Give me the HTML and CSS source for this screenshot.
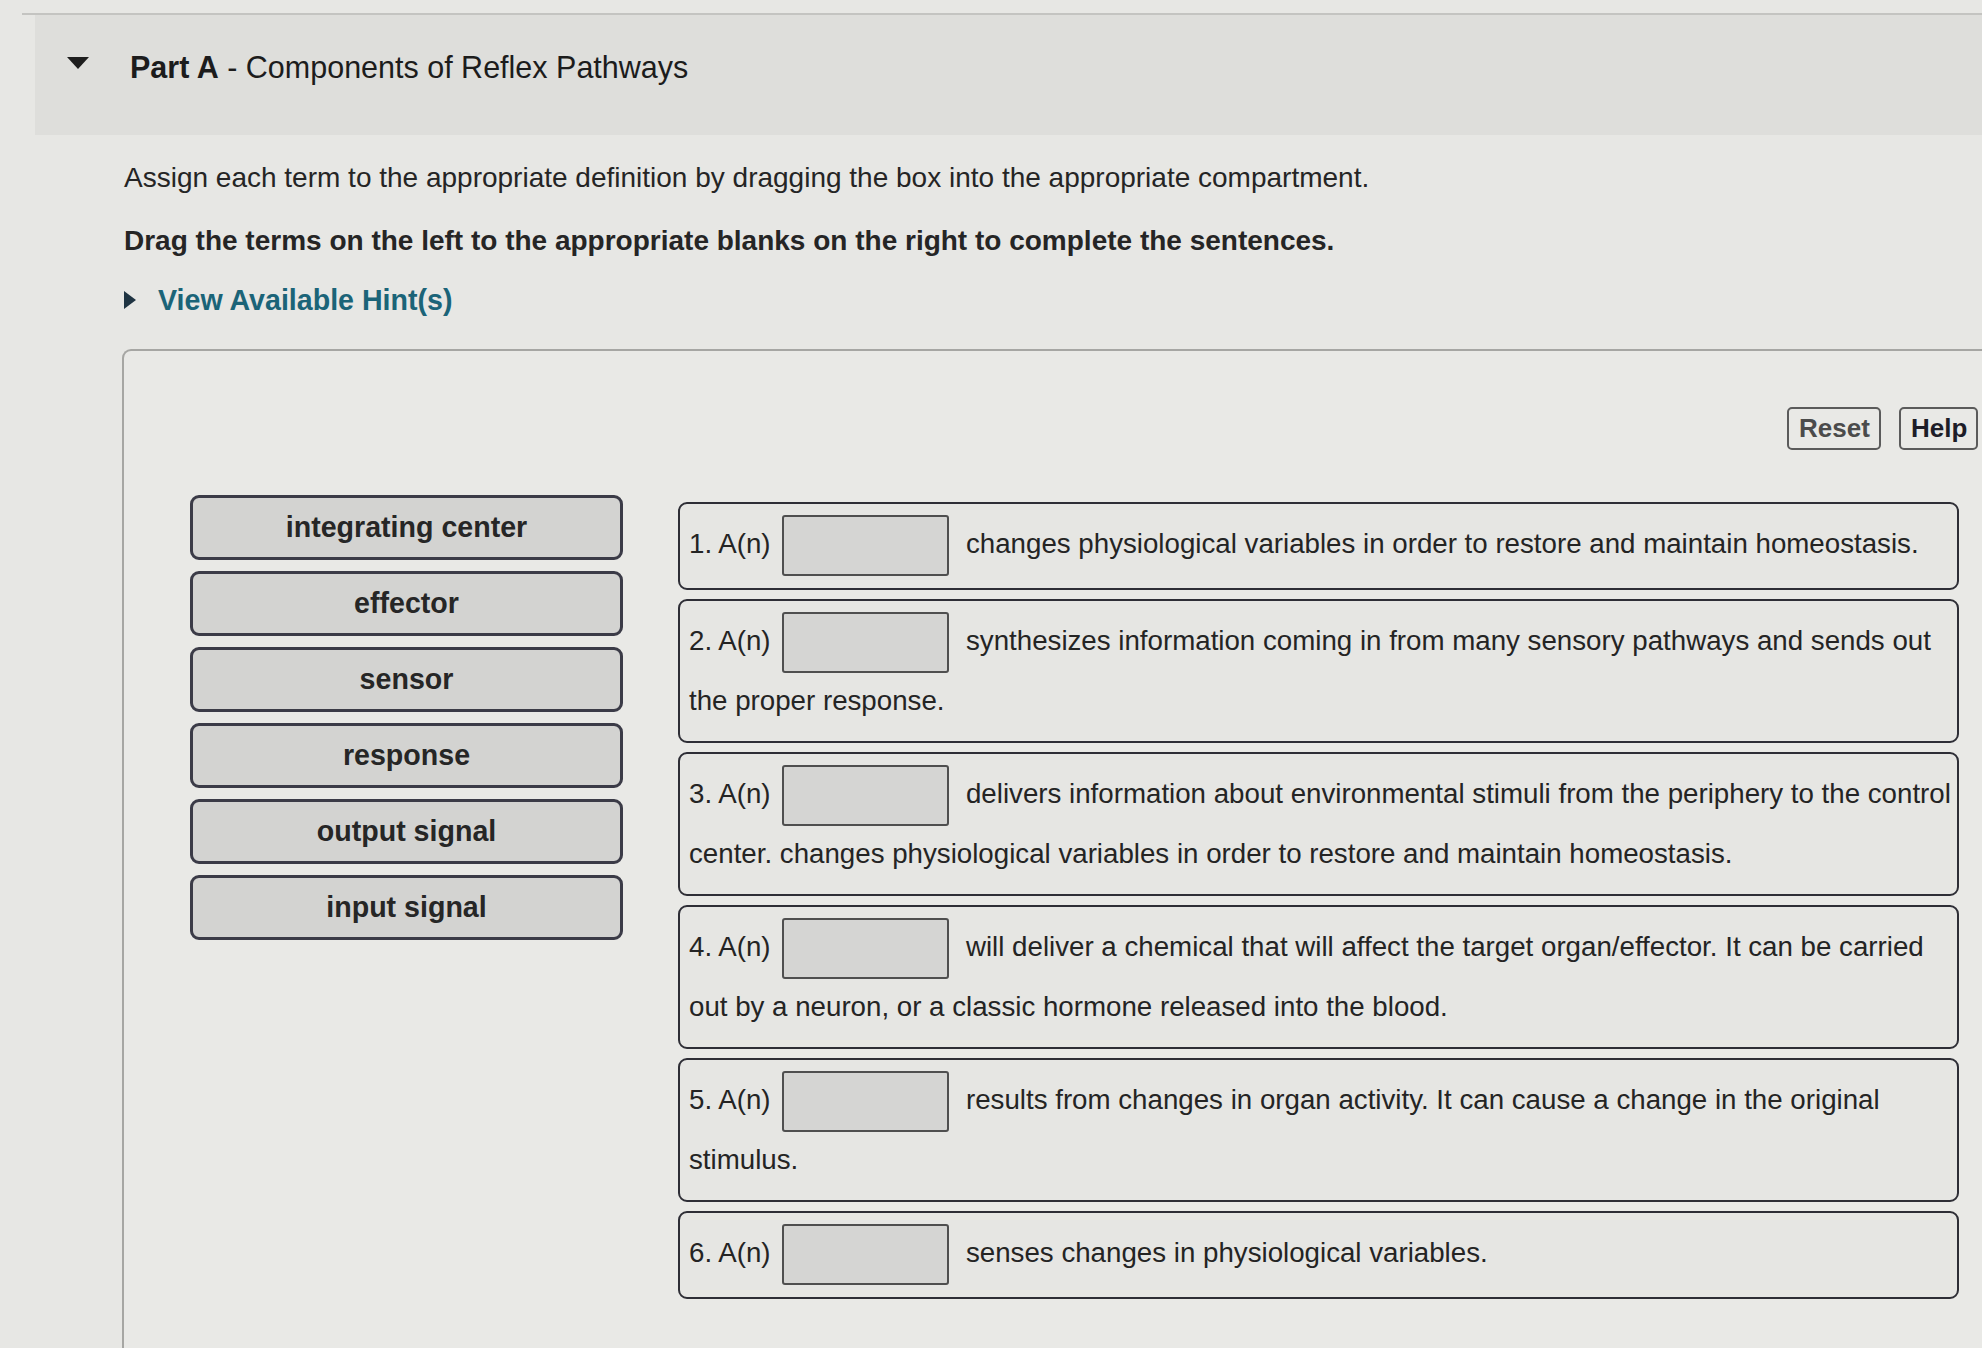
FILE: index.html
```html
<!DOCTYPE html>
<html lang="en">
<head>
<meta charset="utf-8">
<title>Part A - Components of Reflex Pathways</title>
<link rel="stylesheet" href="styles.css">
</head>
<body>
<div class="rule"></div>
<header class="part-header">
  <span class="caret-down"></span>
  <h2 class="part-title"><b>Part A</b> - Components of Reflex Pathways</h2>
</header>
<section class="content">
  <p class="instr">Assign each term to the appropriate definition by dragging the box into the appropriate compartment.</p>
  <p class="instr bold">Drag the terms on the left to the appropriate blanks on the right to complete the sentences.</p>
  <div class="hint"><span class="caret-right"></span><span class="hint-link">View Available Hint(s)</span></div>

  <div class="workbox">
    <div class="toolbar">
      <button class="btn reset">Reset</button>
      <button class="btn help">Help</button>
    </div>
    <div class="work">
      <div class="terms">
        <div class="term">integrating center</div>
        <div class="term">effector</div>
        <div class="term">sensor</div>
        <div class="term">response</div>
        <div class="term">output signal</div>
        <div class="term">input signal</div>
      </div>
      <div class="sentences">
        <div class="sentence">1. A(n) <span class="blank"></span> changes physiological variables in order to restore and maintain homeostasis.</div>
        <div class="sentence">2. A(n) <span class="blank"></span> synthesizes information coming in from many sensory pathways and sends out the proper response.</div>
        <div class="sentence">3. A(n) <span class="blank"></span> delivers information about environmental stimuli from the periphery to the control center. changes physiological variables in order to restore and maintain homeostasis.</div>
        <div class="sentence">4. A(n) <span class="blank"></span> will deliver a chemical that will affect the target organ/effector. It can be carried out by a neuron, or a classic hormone released into the blood.</div>
        <div class="sentence">5. A(n) <span class="blank"></span> results from changes in organ activity. It can cause a change in the original stimulus.</div>
        <div class="sentence">6. A(n) <span class="blank"></span> senses changes in physiological variables.</div>
      </div>
    </div>
  </div>
</section>
</body>
</html>
```

FILE: styles.css
```css
html, body {
  margin: 0;
  padding: 0;
  overflow: hidden;
}
body {
  background: #e7e7e4;
  font-family: "Liberation Sans", Arial, Helvetica, sans-serif;
  color: #222;
  padding-top: 13px;
  height: 1348px;
  box-sizing: border-box;
}
.rule {
  margin-left: 22px;
  border-top: 2px solid #c4c4c1;
}
.part-header {
  margin-left: 35px;
  height: 120px;
  background: #dededb;
  display: flex;
  align-items: flex-start;
  padding-top: 32px;
  box-sizing: border-box;
}
.caret-down {
  width: 0;
  height: 0;
  margin-left: 32px;
  margin-top: 10px;
  border-left: 11px solid transparent;
  border-right: 11px solid transparent;
  border-top: 12px solid #1e1e1e;
}
.part-title {
  margin: 0 0 0 41px;
  font-size: 30.5px;
  line-height: 40px;
  font-weight: normal;
  color: #1c1c1c;
}
.part-title b {
  font-weight: bold;
}
.content {
  padding-left: 122px;
}
.instr {
  margin: 25px 0 0 2px;
  font-size: 28px;
  line-height: 36px;
  color: #252525;
}
.instr.bold {
  margin-top: 27px;
  font-weight: bold;
  font-size: 28px;
}
.hint {
  margin: 23px 0 0 2px;
  display: flex;
  align-items: center;
  height: 36px;
}
.caret-right {
  width: 0;
  height: 0;
  border-top: 9px solid transparent;
  border-bottom: 9px solid transparent;
  border-left: 12px solid #1f3442;
}
.hint-link {
  margin-left: 22px;
  font-size: 28.6px;
  font-weight: bold;
  color: #1b6478;
}
.workbox {
  margin-top: 31px;
  width: 1879px;
  box-sizing: border-box;
  min-height: 1100px;
  border: 2px solid #a6a6a3;
  border-right: none;
  border-radius: 9px 0 0 0;
  background: #e9e9e6;
  padding: 56px 23px 0 66px;
}
.toolbar {
  display: flex;
  justify-content: flex-end;
  gap: 18px;
}
.btn {
  height: 43px;
  padding: 0 10px;
  border: 2px solid #5b5b5b;
  border-radius: 5px;
  background: #e9e9e6;
  font-family: "Liberation Sans", Arial, sans-serif;
  font-size: 26px;
  font-weight: bold;
}
.btn.reset {
  color: #4b4b4b;
  width: 94px;
}
.btn.help {
  color: #1d1d28;
  width: 79px;
}
.work {
  display: flex;
  gap: 55px;
  margin-top: 45px;
  align-items: flex-start;
}
.terms {
  width: 433px;
  display: flex;
  flex-direction: column;
  gap: 11px;
}
.term {
  height: 65px;
  box-sizing: border-box;
  border: 3px solid #3b3b47;
  border-radius: 9px;
  background: #d3d3d1;
  display: flex;
  align-items: center;
  justify-content: center;
  font-size: 28.6px;
  font-weight: bold;
  color: #262626;
}
.sentences {
  width: 1281px;
  display: flex;
  flex-direction: column;
  gap: 9px;
  margin-top: 7px;
}
.sentence {
  border: 2.5px solid #2e2e36;
  border-radius: 9px;
  background: #e6e6e3;
  padding: 11px 4px 12px 9px;
  font-size: 27.7px;
  line-height: 56px;
  color: #242424;
}
.blank {
  display: inline-block;
  vertical-align: middle;
  width: 167px;
  height: 61px;
  box-sizing: border-box;
  margin: 0 9px 0 4px;
  border: 2px solid #4f4f4f;
  border-radius: 3px;
  background: #d5d5d3;
}
```
